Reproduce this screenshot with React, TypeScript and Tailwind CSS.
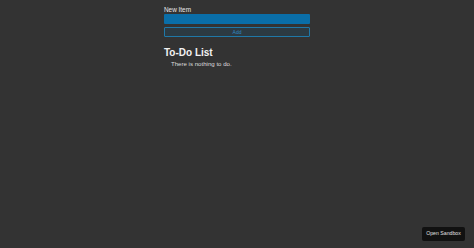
import React from 'react';

export default function App() {
  return (
    <div className="relative w-[474px] h-[248px] bg-[#333333] text-white overflow-hidden" style={{ fontFamily: '"Liberation Sans", Arial, sans-serif' }}>
      <div className="ml-[164px] w-[146px] pt-[6px]">
        <label className="block text-[6.4px] leading-[8px] font-normal text-[#e8e8e8]">New Item</label>
        <div className="h-[10px] w-full bg-[#0a6ea8] rounded-[1px]" />
        <button className="block mt-[3px] h-[10px] w-full border border-[#1f78a8] bg-[#2c3a42] rounded-[1px] text-[5px] leading-[8px] text-[#2f8ac4]">
          Add
        </button>
        <h2 className="mt-[10px] text-[10px] leading-[12px] font-bold text-[#f2f2f2]">To-Do List</h2>
        <p className="mt-[1px] ml-[7px] text-[6.1px] leading-[8px] text-[#dddddd]">There is nothing to do.</p>
      </div>
      <button className="absolute right-[9px] bottom-[7px] w-[43px] h-[14px] bg-[#111111] rounded-[2px] text-[5.2px] text-[#e0e0e0]">
        Open Sandbox
      </button>
    </div>
  );
}
